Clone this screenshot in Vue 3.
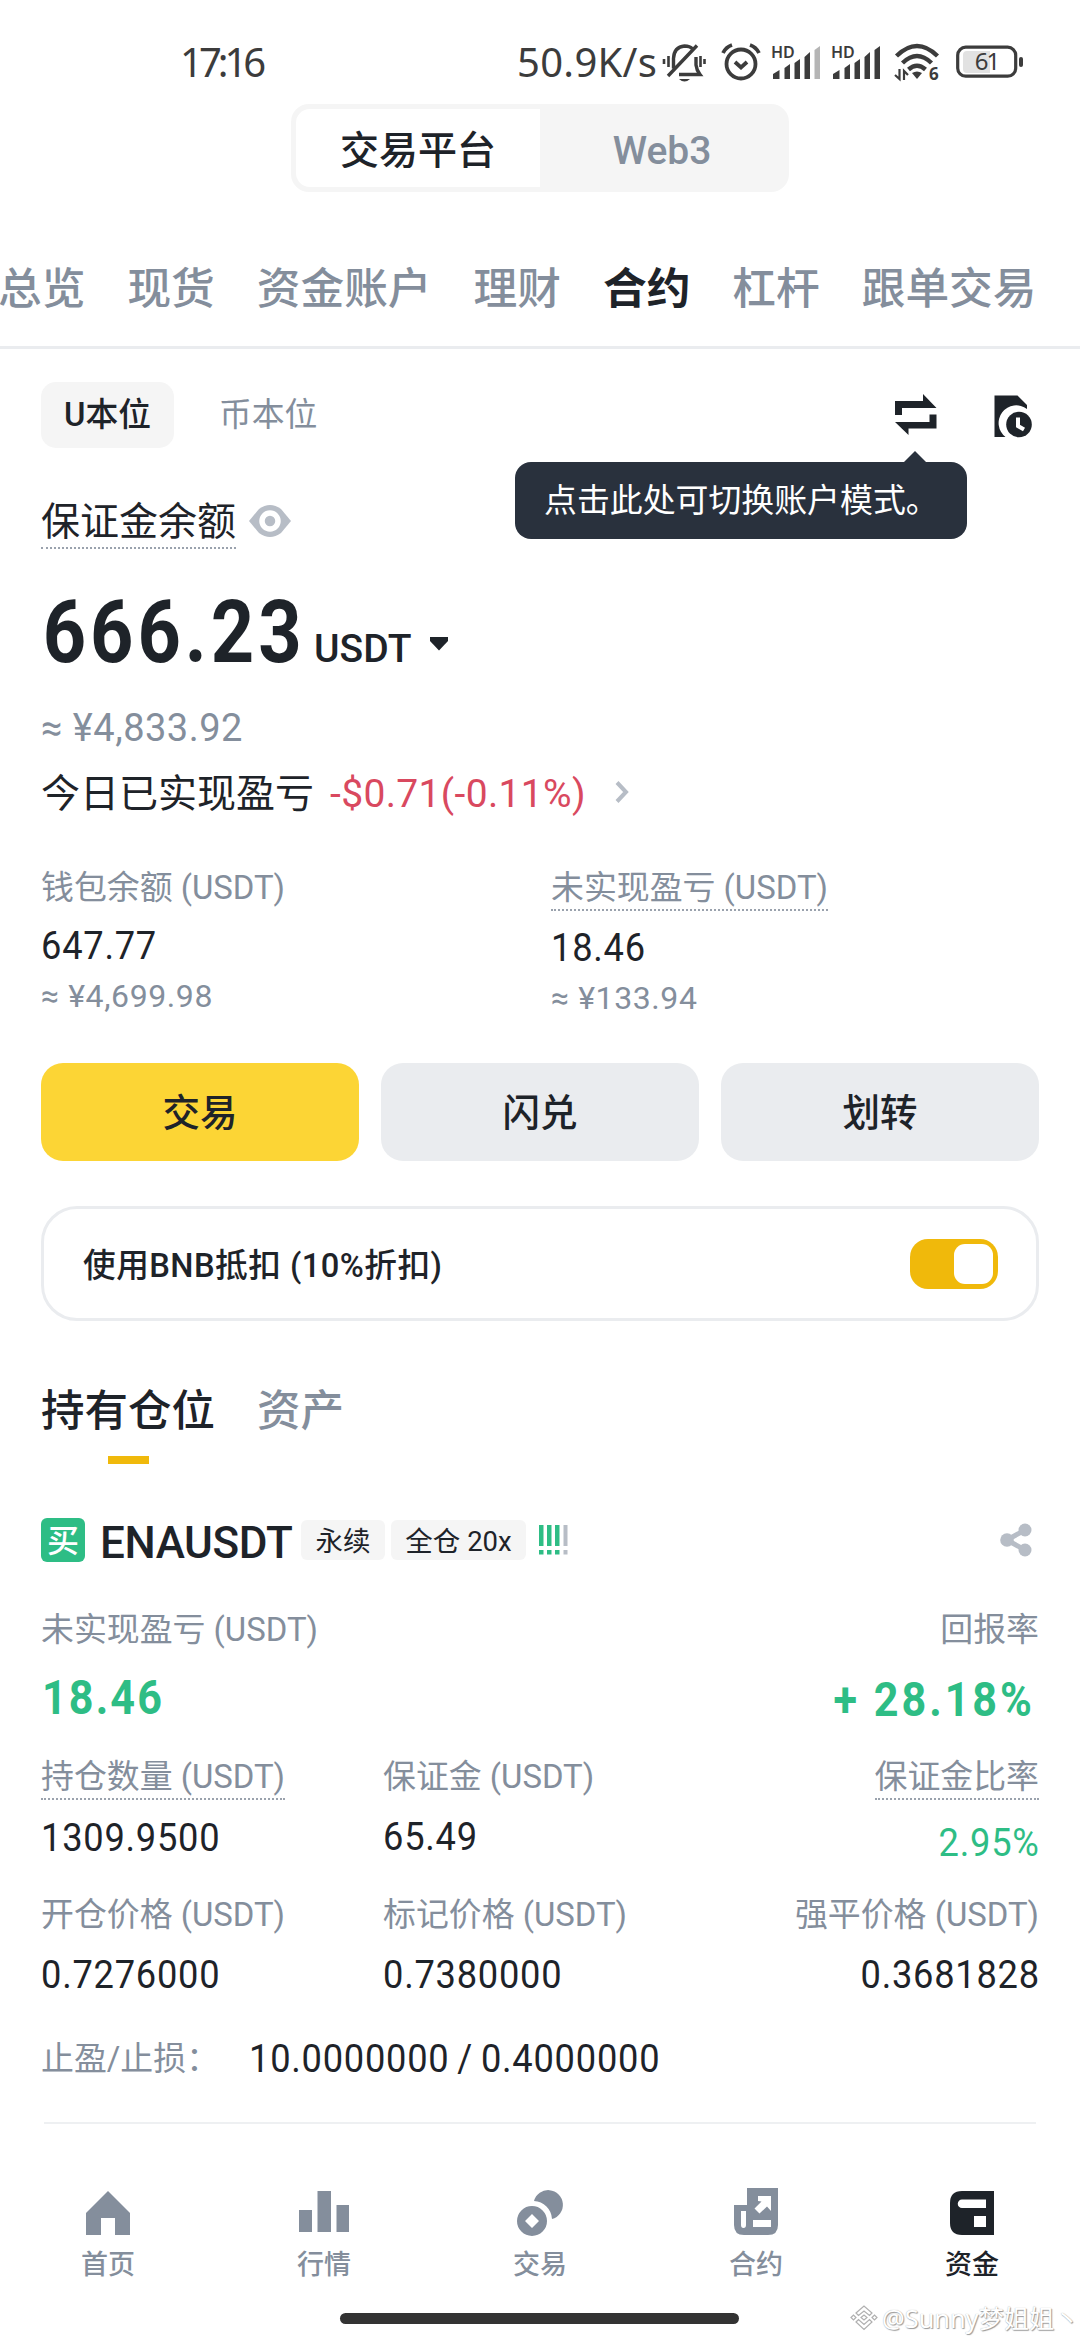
<script setup>
const accountTabs = ['总览', '现货', '资金账户', '理财', '合约', '杠杆', '跟单交易']
const detailRows = [
  [
    { label: '持仓数量', unit: ' (USDT)', value: '1309.9500', hint: true },
    { label: '保证金', unit: ' (USDT)', value: '65.49' },
    { label: '保证金比率', unit: '', value: '2.95%', hint: true, up: true },
  ],
  [
    { label: '开仓价格', unit: ' (USDT)', value: '0.7276000' },
    { label: '标记价格', unit: ' (USDT)', value: '0.7380000' },
    { label: '强平价格', unit: ' (USDT)', value: '0.3681828' },
  ],
]
</script>

<template>
  <div class="screen">
    <header class="status">
      <span class="time">17:16</span>
      <div class="status-right">
        <span class="speed">50.9K/s</span>
        <svg class="bell" width="44" height="40" viewBox="0 0 44 40" fill="none" stroke="#3c3c3c" stroke-width="3.4">
          <path d="M11.500 25.500V15.500Q12 4 22.500 3Q28 3 30.500 6M34 14V22Q34.500 27 38 31.500H17M6 33L35 2.500" />
          <path d="M2 16V21M6.500 13V24M38.500 13V24M42.500 16V21" stroke-width="2.600" />
          <path d="M17 36H28Q22.500 41 17 36Z" fill="#3c3c3c" stroke="none" />
        </svg>
        <svg class="alarm" width="40" height="40" viewBox="0 0 40 40" fill="none" stroke="#3c3c3c" stroke-width="3.800">
          <circle cx="20" cy="22" r="14.500" />
          <path d="M14 20L20 25.500L26 20M2 11Q5 5 11 3M38 11Q35 5 29 3" />
        </svg>
        <svg v-for="n in 2" :key="n" class="signal" width="52" height="48" viewBox="0 -4 52 48" fill="#3c3c3c">
          <text x="0" y="15.500" class="hd">HD</text>
          <path d="M2 37V32L8.500 28V37ZM13.500 37V26L19 22V37ZM23.500 37V21L29 17V37ZM33.500 37V15L39 10V37Z" />
          <path d="M43.500 37V8L49 4V37Z" :fill="n === 1 ? '#b5b5b5' : '#3c3c3c'" />
        </svg>
        <svg class="wifi" width="48" height="48" viewBox="0 -4 48 48" fill="none" stroke="#3c3c3c" stroke-width="4.400">
          <path d="M2.500 14Q23 -6 43.500 14M8.500 21Q23 7 37.500 21M14.500 27.500Q23 20 31.500 27.500" />
          <path d="M18 31Q23 28 28 31L23 37Z" fill="#3c3c3c" stroke="none" />
          <path d="M5.500 27V37L1 33M10 38V29L14 33" stroke-width="2.200" />
          <text x="35" y="38" class="gen">6</text>
        </svg>
        <svg class="battery" width="68" height="40" viewBox="0 0 68 40">
          <rect x="1.700" y="5.200" width="58" height="29" rx="8" fill="#fff" stroke="#3c3c3c" stroke-width="3.200" />
          <path d="M11 9H34V31H11Q7 31 7 27V13Q7 9 11 9Z" fill="#e2e2e2" />
          <rect x="63" y="15" width="4" height="10" rx="2" fill="#3c3c3c" />
          <text x="30.500" y="28" class="level" text-anchor="middle">61</text>
        </svg>
      </div>
    </header>

    <div class="segment">
      <span class="seg active">交易平台</span>
      <span class="seg">Web3</span>
    </div>

    <nav class="tabs">
      <span v-for="t in accountTabs" :key="t" :class="{ on: t === '合约' }">{{ t }}</span>
    </nav>

    <main class="body">
      <div class="modes">
        <span class="chip">U本位</span>
        <span class="coin">币本位</span>
        <svg class="swap" width="42" height="42" viewBox="0 0 42 42" fill="#1e2329">
          <path d="M0 21V7H28V0L41.500 14H7V21ZM41.500 20.500V34.500H13.500V41L0 28H34.500V20.500Z" />
        </svg>
        <svg class="history" width="38" height="43" viewBox="0 0 38 43">
          <path d="M0.500 0.500H23.500L33 10V14A16.500 16.500 0 0 0 11.500 42H0.500Z" fill="#1e2329" />
          <circle cx="25" cy="29.500" r="12.800" fill="#1e2329" />
          <path d="M24 22.500V31L30 34.500" fill="none" stroke="#fff" stroke-width="4" />
        </svg>
        <div class="tooltip">点击此处可切换账户模式。</div>
      </div>

      <div class="margin-title">
        <span class="hint dark">保证金余额</span>
        <svg width="42" height="32" viewBox="0 0 42 32">
          <path d="M0 16L10 4Q21 -4 32 4L42 16L32 28Q21 36 10 28Z" fill="#b7bdc6" />
          <circle cx="21" cy="16" r="8" fill="none" stroke="#fff" stroke-width="5.500" />
        </svg>
      </div>
      <div class="balance">
        <span class="amount">666.23</span>
        <span class="currency">USDT</span>
        <svg width="18" height="14" viewBox="0 0 18 14"><path d="M0 0H18V4L9 13.500L0 4Z" fill="#1e2329" /></svg>
      </div>
      <div class="fiat">≈ ¥4,833.92</div>
      <div class="today">
        <span>今日已实现盈亏</span>
        <span class="loss">-$0.71(-0.11%)</span>
        <svg width="14" height="22" viewBox="0 0 14 22" fill="none"><path d="M2 1.500L11 11L2 20.500" stroke="#b7bdc6" stroke-width="4" /></svg>
      </div>

      <div class="summary">
        <div>
          <div class="label">钱包余额<i> (USDT)</i></div>
          <div class="value">647.77</div>
          <div class="sub">≈ ¥4,699.98</div>
        </div>
        <div class="second">
          <div class="label hint">未实现盈亏<i> (USDT)</i></div>
          <div class="value">18.46</div>
          <div class="sub">≈ ¥133.94</div>
        </div>
      </div>

      <div class="actions">
        <button class="primary">交易</button>
        <button>闪兑</button>
        <button>划转</button>
      </div>

      <div class="card">
        <span class="card-text">使用BNB抵扣 (10%折扣)</span>
        <span class="toggle"><b></b></span>
      </div>

      <div class="subtabs">
        <span class="current">持有仓位</span>
        <span>资产</span>
      </div>

      <div class="position">
        <span class="buy">买</span>
        <span class="symbol">ENAUSDT</span>
        <span class="tag">永续</span>
        <span class="tag second-tag">全仓 20x</span>
        <svg class="risk" width="30" height="30" viewBox="0 0 30 30" fill="#2ebd85">
          <path d="M0 0H4.500V21H0ZM0 25H4.500V29.500H0ZM8 0H12.500V21H8ZM8 25H12.500V29.500H8ZM16 0H20.500V21H16ZM16 25H20.500V29.500H16Z" />
          <path d="M24.500 0H28.500V21H24.500ZM24.500 25H28.500V29.500H24.500Z" fill="#b7bdc6" />
        </svg>
        <svg class="share" width="32" height="34" viewBox="0 0 32 34" fill="#b7bdc6">
          <path d="M7 17L25 7M7 17L25 27" stroke="#b7bdc6" stroke-width="5" />
          <circle cx="7" cy="17" r="6.800" /><circle cx="25" cy="7" r="6.500" /><circle cx="25" cy="27" r="6.500" />
        </svg>
      </div>

      <div class="pnl-labels label"><span>未实现盈亏<i> (USDT)</i></span><span>回报率</span></div>
      <div class="pnl"><span class="gain">18.46</span><span class="roi">+ 28.18%</span></div>

      <div v-for="(row, i) in detailRows" :key="i" class="details">
        <div v-for="c in row" :key="c.label" class="cell">
          <div class="label" :class="{ hint: c.hint }">{{ c.label }}<i>{{ c.unit }}</i></div>
          <div class="value" :class="{ up: c.up }">{{ c.value }}</div>
        </div>
      </div>

      <div class="stops"><span class="label">止盈/止损：</span><span class="value">10.0000000 / 0.4000000</span></div>
      <div class="rule"></div>
    </main>

    <footer class="bottom">
      <div class="item">
        <svg width="48" height="48" viewBox="0 0 48 48" fill="currentColor"><path d="M24 3L46 25V47H31V30H17V47H2V25Z" /></svg>
        首页
      </div>
      <div class="item">
        <svg width="50" height="48" viewBox="0 0 50 48" fill="currentColor"><path d="M0 22H13V44H0ZM18.500 3H32V44H18.500ZM37.500 17H50V44H37.500Z" /></svg>
        行情
      </div>
      <div class="item">
        <svg width="48" height="48" viewBox="0 0 48 48" fill="currentColor">
          <path d="M18 13A14.700 14.700 0 1 1 36 31A19 19 0 0 0 18 13Z" />
          <path fill-rule="evenodd" d="M16 18A15 15 0 1 1 16 48A15 15 0 1 1 16 18ZM16 26L9 33L16 40L23 33Z" />
        </svg>
        交易
      </div>
      <div class="item">
        <svg width="48" height="48" viewBox="0 0 48 48" fill="currentColor">
          <path fill-rule="evenodd" d="M15 0H46V37Q46 47 36 47H12Q2 47 2 37V17H15ZM26 8V13L29.500 13.500L22.500 20.500L27.500 25.500L35 18.500L39 23V8ZM9 23V37Q9 40 11.500 40Q14 40 14 37V23ZM21 32V39H39V32Z" />
        </svg>
        合约
      </div>
      <div class="item selected">
        <svg width="48" height="48" viewBox="0 0 48 48" fill="currentColor">
          <path fill-rule="evenodd" d="M14 3H46V47H14Q2 47 2 35V15Q2 3 14 3ZM14 11.500A4 4 0 0 0 14 20H38V11.500ZM26 28V39H38V28Z" />
        </svg>
        资金
      </div>
    </footer>
    <div class="homebar"></div>
    <div class="watermark">
      <svg width="28" height="26" viewBox="0 0 28 26" fill="none" stroke="#b0b0b0" stroke-width="1.200">
        <path d="M6 8L14 1L22 8L19.500 10.500L14 6L8.500 10.500ZM1 12.500L3.500 10L6 12.500L3.500 15ZM22 12.500L24.500 10L27 12.500L24.500 15ZM11 12.500L14 10L17 12.500L14 15ZM6 17L8.500 14.500L14 19.500L19.500 14.500L22 17L14 24.500Z" />
      </svg>
      <span>@Sunny梦姐姐丶</span>
    </div>
  </div>
</template>

<style>
body { background: #fff; }
</style>

<style scoped>
* { box-sizing: border-box; }
.screen { position: relative; width: 1080px; height: 2340px; overflow: hidden; background: #fff; color: #1e2329; font-family: Roboto, "Noto Sans CJK SC", sans-serif; white-space: nowrap; display: flex; flex-direction: column; }
.screen > * { flex: none; }
svg { display: block; flex: none; overflow: visible; }
i { font-style: normal; letter-spacing: 0; white-space: pre; }

.status { height: 104px; padding: 19px 0 0 180px; display: flex; align-items: center; color: #3c3c3c; font: 500 40px/85px "Noto Sans", sans-serif; }
.time { width: 337px; letter-spacing: -4px; font-weight: 400; }
.status-right { display: flex; align-items: center; }
.speed { width: 145px; letter-spacing: 0.300px; font-weight: 400; }
.bell { margin-top: 2px; }
.alarm { margin-left: 15px; }
.signal { margin-left: 10px; }
.signal + .signal { margin-left: 8px; }
.hd { font: 600 16px "Noto Sans", sans-serif; }
.wifi { margin-left: 11px; }
.gen { font: 700 17px "Noto Sans", sans-serif; fill: #3c3c3c; stroke: none; }
.battery { margin-left: 14px; }
.level { font: 400 24px "Noto Sans", sans-serif; letter-spacing: -2px; fill: #3c3c3c; }

.segment { align-self: center; width: 498px; height: 88px; padding: 5px; border-radius: 18px; background: #f5f5f5; display: flex; }
.seg { flex: 1; font-size: 39px; line-height: 84px; font-weight: 500; text-align: center; color: #848e9c; }
.seg.active { background: #fff; color: #1e2329; border-radius: 14px 0 0 14px; height: 78px; }

.tabs { height: 157px; padding: 41px 0 0 0; margin-left: -2px; display: flex; gap: 42px; font-size: 43.700px; line-height: 112px; font-weight: 500; color: #848e9c; border-bottom: 3px solid #eaecef; }
.tabs .on { color: #1e2329; font-weight: 700; }

.body { padding: 33px 41px 0; }
.modes { position: relative; height: 66px; display: flex; align-items: center; font-size: 32.800px; line-height: 66px; }
.chip { width: 133px; text-align: center; background: #f5f5f5; border-radius: 15px; font-weight: 500; }
.coin { margin-left: 45px; color: #848e9c; }
.swap { margin-left: auto; }
.history { margin: 2px 7px 0 57px; }
.tooltip { position: absolute; left: 474px; top: 80px; width: 452px; height: 77px; padding-left: 29px; border-radius: 16px; background: #29313d; color: #fff; font-size: 32.900px; line-height: 78px; }
.tooltip::before { content: ""; position: absolute; left: 389px; top: -11px; border: 11px solid transparent; border-top: 0; border-bottom-color: #29313d; }

.margin-title { margin-top: 50px; display: flex; gap: 13px; align-items: flex-start; font-size: 39px; line-height: 49px; }
.margin-title svg { margin-top: 7px; }
.hint { border-bottom: 2px dotted #9aa2ad; }
.balance { margin-top: 39px; height: 88px; display: flex; align-items: baseline; line-height: 88px; }
.amount { width: 273px; padding-left: 2px; font-size: 88px; font-weight: 700; letter-spacing: 4.600px; transform: scaleX(0.86); transform-origin: left; }
.currency { width: 116px; font-size: 39px; font-weight: 500; }
.balance svg { align-self: flex-start; margin-top: 49px; }
.fiat { margin-top: 28px; font-size: 38px; line-height: 48px; letter-spacing: 0.500px; color: #848e9c; }
.today { margin-top: 18px; display: flex; align-items: center; font-size: 39px; line-height: 48px; }
.loss { color: #d9495f; width: 285px; margin-left: 16px; letter-spacing: 0.350px; }
.today svg { margin-top: -4px; }

.label { font-size: 32.900px; line-height: 42px; color: #848e9c; }
.value { font-size: 39px; line-height: 40px; letter-spacing: 0.800px; transform: scaleX(0.93); transform-origin: left; }
.summary { margin-top: 49px; height: 196px; display: grid; grid-template-columns: 510px 1fr; }
.summary > div { display: flex; flex-direction: column; align-items: flex-start; }
.summary .value { margin-top: 17px; }
.sub { margin-top: 13px; font-size: 32px; line-height: 34px; letter-spacing: 0.600px; color: #848e9c; }

.actions { display: flex; gap: 22px; }
button { flex: 1; height: 98px; border: 0; padding: 0; border-radius: 22px; background: #eaecef; color: #1e2329; font: 500 37.500px/101px Roboto, "Noto Sans CJK SC", sans-serif; }
.primary { background: #fcd535; }
.card { margin-top: 45px; height: 115px; padding: 0 38px 0 39px; border: 3px solid #eaecef; border-radius: 36px; display: flex; align-items: center; justify-content: space-between; font-size: 32.700px; font-weight: 500; letter-spacing: 0.450px; }
.card-text { padding-bottom: 3px; }
.toggle { width: 88px; height: 50px; padding: 5px; border-radius: 18px; background: #f0b90b; display: flex; justify-content: flex-end; }
.toggle b { width: 39px; border-radius: 11px; background: #fff; }

.subtabs { margin-top: 61px; height: 82px; display: flex; gap: 42px; font-size: 43.500px; line-height: 60px; font-weight: 500; color: #848e9c; }
.current { color: #1e2329; display: flex; flex-direction: column; align-items: center; }
.current::after { content: ""; width: 41px; height: 8px; margin-top: 14px; background: #f0b90b; }

.position { margin-top: 54px; height: 44px; display: flex; align-items: center; }
.buy { width: 44px; height: 44px; border-radius: 6px; background: #2ebd85; color: #fff; font-size: 32px; line-height: 46px; font-weight: 500; text-align: center; }
.symbol { margin-left: 15px; width: 201px; font-size: 44px; line-height: 50px; font-weight: 500; padding-top: 5px; letter-spacing: -0.400px; }
.tag { height: 40px; width: 84px; border-radius: 6px; background: #f5f5f5; font-size: 27.500px; line-height: 43px; text-align: center; }
.second-tag { margin-left: 6px; width: 135px; }
.risk { margin-left: 13px; }
.share { margin: -1px 7px 0 auto; }
.pnl-labels { margin-top: 47px; display: flex; justify-content: space-between; }
.pnl { margin-top: 17px; height: 60px; display: flex; justify-content: space-between; padding: 0 4px 0 1px; color: #2ebd85; font-size: 49px; line-height: 60px; font-weight: 700; }
.gain { letter-spacing: 2.400px; transform: scaleX(0.88); transform-origin: left; }
.roi { padding-top: 2px; letter-spacing: 3.400px; transform: scaleX(0.88); transform-origin: right; }

.details { margin-top: 28px; height: 110px; display: grid; grid-template-columns: 342px 1fr 1fr; }
.cell { display: flex; flex-direction: column; align-items: flex-start; }
.cell:last-child { align-items: flex-end; }
.cell:last-child .value { transform-origin: right; margin-right: -1px; }
.cell .hint + .value { margin-top: 18px; }
.cell .value { margin-top: 19px; }
.cell .value.up { margin-top: 23px; color: #2ebd85; }
.stops { margin-top: 33px; height: 44px; display: flex; align-items: center; }
.stops .label { width: 208px; }
.stops .value { word-spacing: -2px; }
.rule { margin: 41px 3px 0; height: 2px; background: #eef0f2; }

.bottom { margin-top: 64px; height: 100px; display: flex; }
.item { width: 216px; display: flex; flex-direction: column; align-items: center; font-size: 27px; line-height: 58px; font-weight: 500; color: #848e9c; }
.selected { color: #1e2329; }
.homebar { margin: 25px 0 0 340px; width: 399px; height: 11px; border-radius: 6px; background: #333; }
.watermark { position: absolute; left: 850px; top: 2300px; height: 36px; display: flex; align-items: center; gap: 4px; color: #fff; font: 400 25.300px/36px "Noto Sans", "Noto Sans CJK SC", sans-serif; text-shadow: 1px 1px 1px #999, 0 0 1px #aaa; }
</style>
